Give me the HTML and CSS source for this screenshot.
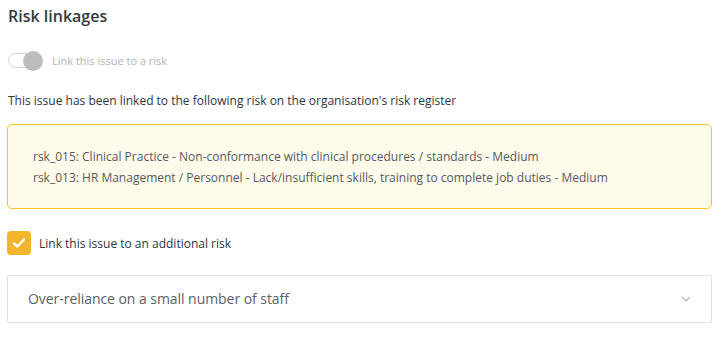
FILE: index.html
```html
<!DOCTYPE html>
<html>
<head>
<meta charset="utf-8">
<link rel="stylesheet" href="styles.css">
</head>
<body>
<div class="panel">
  <h2 class="title">Risk linkages</h2>
  <div class="toggle-row">
    <span class="toggle"><span class="knob"></span></span>
    <span class="toggle-label">Link this issue to a risk</span>
  </div>
  <p class="intro">This issue has been linked to the following risk on the organisation's risk register</p>
  <div class="notice">
    <div class="risk">rsk_015: Clinical Practice - Non-conformance with clinical procedures / standards - Medium</div>
    <div class="risk">rsk_013: HR Management / Personnel - Lack/insufficient skills, training to complete job duties - Medium</div>
  </div>
  <label class="check-row">
    <span class="checkbox">
      <svg width="14" height="12" viewBox="0 0 14 12"><path d="M2 6.5 L5.5 9.5 L12 2.5" fill="none" stroke="#fff" stroke-width="2.4" stroke-linecap="round" stroke-linejoin="round"/></svg>
    </span>
    <span class="check-label">Link this issue to an additional risk</span>
  </label>
  <div class="select">
    <span class="select-value">Over-reliance on a small number of staff</span>
    <svg class="chevron" width="10" height="6" viewBox="0 0 10 6"><path d="M1 1 L5 5 L9 1" fill="none" stroke="#b5b5b5" stroke-width="1.2"/></svg>
  </div>
</div>
</body>
</html>
```
FILE: styles.css
```css
html, body {
  margin: 0;
  padding: 0;
  background: #ffffff;
}
body {
  font-family: "Open Sans", Lato, sans-serif;
  color: #2e3440;
}
.panel {
  width: 705px;
  padding: 0 0 0 7px;
}
.title {
  margin: 0;
  padding: 4px 0 0 1px;
  font-size: 16px;
  line-height: 24px;
  font-weight: 600;
  color: #333a40;
}
.toggle-row {
  display: flex;
  align-items: center;
  margin-top: 22px;
  height: 20px;
  padding-left: 1px;
}
.toggle {
  position: relative;
  display: inline-block;
  width: 32px;
  height: 15px;
  border: 1px solid #d2d2d2;
  border-radius: 9px;
  background: #fff;
  box-sizing: border-box;
}
.knob {
  position: absolute;
  left: 14px;
  top: -3px;
  width: 20px;
  height: 20px;
  border-radius: 50%;
  background: #bdbdbd;
}
.toggle-label {
  margin-left: 12px;
  font-size: 11px;
  color: #b3b3b3;
}
.intro {
  margin: 21px 0 0 1px;
  font-size: 12px;
  line-height: 20px;
  color: #2e3440;
}
.notice {
  margin-top: 13px;
  padding: 21px 25px 20px;
  border: 1px solid #f3c623;
  border-radius: 5px;
  background: #fffbeb;
}
.risk {
  font-size: 12px;
  line-height: 21px;
  color: #55595e;
}
.check-row {
  display: flex;
  align-items: center;
  margin-top: 22px;
}
.checkbox {
  display: flex;
  align-items: center;
  justify-content: center;
  width: 24px;
  height: 24px;
  border-radius: 4px;
  background: #f2b52d;
}
.check-label {
  margin-left: 8px;
  font-size: 12px;
  color: #2e3440;
}
.select {
  display: flex;
  align-items: center;
  justify-content: space-between;
  margin-top: 20px;
  height: 48px;
  box-sizing: border-box;
  padding: 0 20px 1px 20px;
  border: 1px solid #e1e1e1;
  border-radius: 2px;
}
.select-value {
  font-size: 14px;
  letter-spacing: -0.05px;
  color: #5a5f66;
}
```
